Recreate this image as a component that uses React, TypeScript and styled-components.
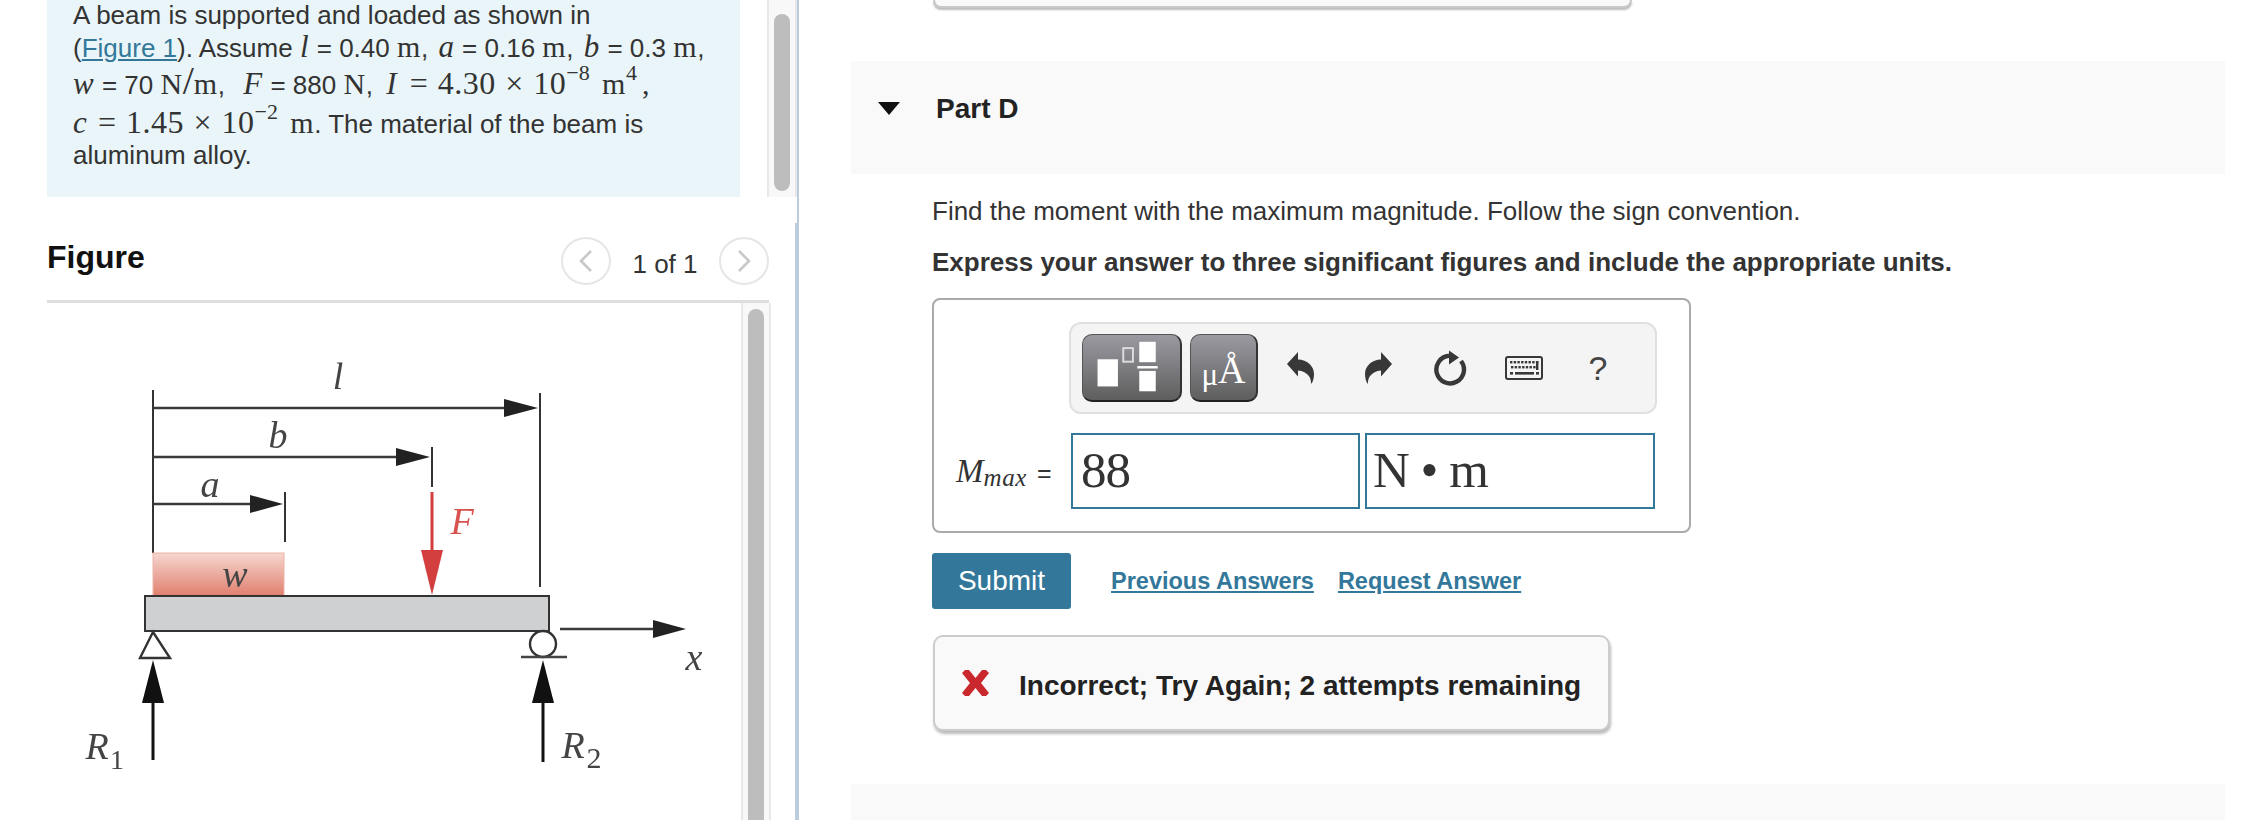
import React from "react";
import styled, { createGlobalStyle } from "styled-components";

const Global = createGlobalStyle`
  html, body { margin: 0; padding: 0; background: #fff; overflow: hidden; }
  body { font-family: "Liberation Sans", Arial, sans-serif; color: #333; }
`;
const Page = styled.div`
  display: flex; width: 2262px; height: 820px; overflow: hidden; background: #fff;
`;
const LeftPane = styled.section`
  position: relative; width: 799px; height: 820px; flex: none; box-sizing: border-box;
  border-right: 2px solid #bdcbde;
`;
const ResizeGrip = styled.div`
  position: absolute; left: 795px; top: 223px; width: 2px; bottom: 0; background: #bdcbde;
`;
const ProblemRow = styled.div`
  display: flex; height: 197px; padding-left: 47px;
`;
const InfoBox = styled.div`
  width: 694px; background: #e9f5f8; padding-left: 26px; box-sizing: border-box;
  font-size: 26px; color: #333;
`;
const Line = styled.div<{ $h: number }>`
  height: ${p => p.$h}px; line-height: ${p => p.$h}px; white-space: nowrap;
`;
const Unit = styled.span`
  font-family: "Liberation Serif", serif; font-size: 30px; letter-spacing: 0.6px;
`;
const Var = styled.span<{ $gap?: number }>`
  font-family: "Liberation Serif", serif; font-style: italic; font-size: 31px; letter-spacing: 1px;
  margin-left: ${p => p.$gap ?? 0}px;
`;
const Expr = styled.span<{ $gap: number }>`
  font-family: "Liberation Serif", serif; font-size: 32px; letter-spacing: 0.5px; word-spacing: 1px;
  margin-left: ${p => p.$gap}px;
`;
const Sup = styled.sup`
  font-family: "Liberation Serif", serif; font-size: 22px; line-height: 0; vertical-align: 14px;
  margin-right: 5px;
`;
const TallSlash = styled.span`
  font-family: "Liberation Serif", serif; font-size: 40px; line-height: 0; font-weight: 300;
`;
const FigLink = styled.a`
  color: #33789a; text-decoration: underline;
`;
const Track = styled.div<{ $mid: number }>`
  flex: none; width: 30px; box-sizing: border-box; background: #f8f8f8;
  border-left: 2px solid #e8e8e8; border-right: 2px solid #e8e8e8;
  margin-left: ${p => p.$mid}px; padding: 0 5px;
`;
const TrackUpper = styled(Track)`padding-top: 14px;`;
const TrackLower = styled(Track)`padding-top: 6px;`;
const Thumb = styled.div<{ $h: number }>`
  width: 16px; height: ${p => p.$h}px; background: #bdbdbd; border-radius: 8px;
`;
const FigureHead = styled.div`
  display: flex; align-items: flex-start; margin-left: 47px; width: 722px; height: 106px;
  padding-top: 40px; box-sizing: border-box; border-bottom: 3px solid #dedede;
`;
const FigureTitle = styled.h2`
  margin: 2px 0 0; font-size: 32px; line-height: 36px; font-weight: 700; color: #111; flex: 1;
`;
const Pager = styled.div`
  display: flex; align-items: center; height: 48px;
`;
const PageBtn = styled.button`
  width: 50px; height: 48px; border-radius: 50%; border: 2px solid #e6e6e6; background: #fff;
  display: flex; align-items: center; justify-content: center; padding: 0;
`;
const PageText = styled.span`
  font-size: 26px; color: #333; width: 108px; text-align: center; padding-top: 6px;
`;
const FigureBody = styled.div`
  display: flex; padding-left: 47px; height: 517px;
`;
const FigureSvg = styled.svg`
  width: 694px; height: 517px; flex: none; display: block; filter: blur(0.5px);
`;
const FigText = styled.text`
  font-family: "Liberation Serif", serif; font-style: italic; font-size: 38px; fill: #444; text-anchor: middle;
`;

const RightPane = styled.main`
  flex: 1; padding-left: 52px; min-width: 0;
`;
const PrevCard = styled.div`
  margin-left: 82px; width: 699px; height: 8px; box-sizing: border-box; background: #f9f9f9;
  border: 2px solid #c8c8c8; border-top: 0; border-radius: 0 0 8px 8px; box-shadow: 0 2px 2px #bbb;
`;
const PartBand = styled.div`
  margin-top: 53px; width: 1374px; height: 113px; background: #f9f9f9; box-sizing: border-box;
  display: flex; align-items: center; padding: 0 0 18px 27px;
`;
const Caret = styled.div`
  width: 0; height: 0; border-left: 11px solid transparent; border-right: 11px solid transparent;
  border-top: 13px solid #111; margin-top: -1px;
`;
const PartTitle = styled.h3`
  margin: 0 0 0 36px; font-size: 28px; font-weight: 700; color: #222;
`;
const Body = styled.div`
  padding-left: 81px;
`;
const Prompt = styled.p`
  margin: 22px 0 0; font-size: 26px; line-height: 30px; color: #333;
`;
const PromptBold = styled.p`
  margin: 21px 0 0; font-size: 26px; line-height: 30px; font-weight: 700; color: #333;
`;
const AnswerBox = styled.div`
  margin: 21px 0 0 0; width: 759px; height: 235px; box-sizing: border-box;
  border: 2px solid #aaa; border-radius: 8px; padding-top: 22px;
`;
const Toolbar = styled.div`
  margin-left: 135px; width: 588px; height: 92px; box-sizing: border-box; background: #f4f4f4;
  border: 2px solid #e0e0e0; border-radius: 12px; display: flex; align-items: center; padding-left: 11px;
`;
const ToolBtn = styled.button<{ $w: number }>`
  width: ${p => p.$w}px; height: 68px; flex: none; box-sizing: border-box; padding: 0; margin-right: 8px;
  border: 1px solid #555; border-bottom: 2px solid #222; border-right: 2px solid #333; border-radius: 10px;
  background: linear-gradient(#9b9aa2, #5e5e5e); color: #fff;
  display: flex; align-items: center; justify-content: center;
  font-family: "Liberation Serif", serif;
`;
const Mu = styled.span`font-size: 31px; padding-top: 14px;`;
const Ang = styled.span`font-size: 38px; padding-top: 4px;`;
const IconSlot = styled.div<{ $w: number; $first?: boolean }>`
  width: ${p => p.$w}px; flex: none; display: flex; justify-content: center; align-items: center;
  margin-left: ${p => (p.$first ? -8 : 0)}px; color: #333;
`;
const Question = styled.span`
  font-size: 34px; color: #444; font-family: "Liberation Sans", sans-serif;
`;
const InputRow = styled.div`
  display: flex; align-items: center; margin-top: 19px; padding-left: 22px;
`;
const EqLabel = styled.div`
  width: 115px; flex: none; font-size: 25px; white-space: nowrap; color: #333; word-spacing: 3px;
`;
const LabelM = styled.span`font-family: "Liberation Serif", serif; font-style: italic; font-size: 33px;`;
const LabelSub = styled.sub`font-family: "Liberation Serif", serif; font-style: italic; font-size: 25px; letter-spacing: 0.6px; line-height: 0; vertical-align: -4px;`;
const FieldBox = styled.div<{ $w: number; $pad: number }>`
  width: ${p => p.$w}px; height: 76px; box-sizing: border-box; border: 2px solid #31789a;
  font-family: "Liberation Serif", serif; font-size: 51px; line-height: 70px; color: #333;
  padding-left: ${p => p.$pad}px; white-space: nowrap; flex: none; margin-right: 5px; word-spacing: -2px;
`;
const Digits = styled.span`letter-spacing: -1px;`;
const ActionRow = styled.div`
  display: flex; align-items: center; margin-top: 20px;
`;
const SubmitBtn = styled.button`
  width: 139px; height: 56px; background: #33789a; color: #fff; border: 0; border-radius: 3px;
  font: 28px "Liberation Sans", sans-serif; padding: 0;
`;
const ActionLink = styled.a<{ $ml: number }>`
  margin-left: ${p => p.$ml}px; color: #33789a; font-size: 23.5px; font-weight: 700; text-decoration: underline;
`;
const Feedback = styled.div`
  margin: 26px 0 0 1px; width: 677px; height: 96px; box-sizing: border-box; background: #f9f9f9;
  border: 2px solid #ccc; border-radius: 10px; box-shadow: 1px 3px 3px #bbb;
  display: flex; align-items: center; padding-left: 27px; gap: 30px;
`;
const FeedbackText = styled.span`
  font-size: 28px; font-weight: 700; color: #222; white-space: nowrap; padding-top: 5px;
`;
const NextBand = styled.div`
  margin-top: 53px; width: 1374px; height: 60px; background: #f9f9f9;
`;

const Arrow = ({ x1, x2, y, hx, hw, c = "#222" }: { x1: number; x2: number; y: number; hx: number; hw: number; c?: string }) => (
  <>
    <line x1={x1} y1={y} x2={hx} y2={y} stroke="#3a3a3a" strokeWidth={2.4} />
    <polygon points={`${hx},${y - hw} ${x2},${y} ${hx},${y + hw}`} fill={c} />
  </>
);

const BeamFigure = () => (
  <FigureSvg viewBox="47 303 694 517">
    <defs>
      <linearGradient id="load" x1="0" y1="0" x2="0" y2="1">
        <stop offset="0" stopColor="#f6d6cf" />
        <stop offset="1" stopColor="#e07f6e" />
      </linearGradient>
    </defs>
    <line x1={153} y1={390} x2={153} y2={553} stroke="#333" strokeWidth={2} />
    <line x1={540} y1={393} x2={540} y2={587} stroke="#333" strokeWidth={2} />
    <line x1={432} y1={447} x2={432} y2={487} stroke="#333" strokeWidth={2} />
    <line x1={285} y1={492} x2={285} y2={542} stroke="#333" strokeWidth={2} />
    <Arrow x1={153} x2={538} y={408} hx={504} hw={9} />
    <Arrow x1={153} x2={430} y={457} hx={396} hw={9} />
    <Arrow x1={153} x2={283} y={504} hx={250} hw={9} />
    <FigText x={338} y={389}>l</FigText>
    <FigText x={278} y={448}>b</FigText>
    <FigText x={210} y={497}>a</FigText>
    <rect x={153} y={553} width={131} height={43} fill="url(#load)" stroke="#ecb3a8" strokeWidth={1} />
    <FigText x={235} y={587}>w</FigText>
    <line x1={432} y1={492} x2={432} y2={552} stroke="#d33f3f" strokeWidth={3} />
    <polygon points="421,550 443,550 432,595" fill="#d33f3f" />
    <FigText x={462} y={534} style={{ fill: "#d8524e" }}>F</FigText>
    <rect x={145} y={596} width={404} height={35} fill="#cfd0d2" stroke="#333" strokeWidth={2} />
    <Arrow x1={560} x2={686} y={629} hx={653} hw={9} />
    <FigText x={694} y={670}>x</FigText>
    <polygon points="153,632 140,658 170,658" fill="#fff" stroke="#333" strokeWidth={2.4} />
    <ellipse cx={543} cy={644} rx={13} ry={13} fill="#fff" stroke="#333" strokeWidth={2.4} />
    <line x1={521} y1={657} x2={567} y2={657} stroke="#444" strokeWidth={2.6} />
    <line x1={153} y1={700} x2={153} y2={760} stroke="#111" strokeWidth={3} />
    <polygon points="153,660 142,703 164,703" fill="#111" />
    <line x1={543} y1={700} x2={543} y2={762} stroke="#111" strokeWidth={3} />
    <polygon points="543,660 532,703 554,703" fill="#111" />
    <FigText x={97} y={759}>R</FigText>
    <FigText x={117} y={769} style={{ fontSize: 28, fontStyle: "normal" }}>1</FigText>
    <FigText x={573} y={758}>R</FigText>
    <FigText x={594} y={768} style={{ fontSize: 30, fontStyle: "normal" }}>2</FigText>
  </FigureSvg>
);

const UndoIcon = ({ flip }: { flip?: boolean }) => (
  <svg width="27" height="32" viewBox="0 0 27 32" style={flip ? { transform: "scaleX(-1)" } : undefined}>
    <path d="M0 12 L11 0 L11 7.5 C20 7.5 27 14 27 22 C27 26 26 30 24 32 C24.5 26 21 19.5 11 18.5 L11 24.5 Z" fill="#383838" />
  </svg>
);
const ResetIcon = () => (
  <svg width="34" height="36" viewBox="0 0 34 36">
    <path d="M28 11 A13.8 13.8 0 1 1 16 5.8" fill="none" stroke="#383838" strokeWidth="4.4" />
    <path d="M16 0.5 L26 7.5 L16 14.5 Z" fill="#383838" />
  </svg>
);
const KeyboardIcon = () => (
  <svg width="38" height="24" viewBox="0 0 38 24">
    <rect x="1" y="1" width="36" height="22" rx="2" fill="#f4f4f4" stroke="#383838" strokeWidth="2" />
    {[0, 1, 2, 3, 4, 5, 6, 7].map(i => <rect key={i} x={5 + i * 3.7} y="5" width="2.4" height="2.4" fill="#383838" />)}
    {[0, 1, 2, 3, 4, 5, 6].map(i => <rect key={i} x={6 + i * 3.7} y="10" width="2.4" height="2.4" fill="#383838" />)}
    <rect x="31" y="5" width="2.4" height="9" fill="#383838" />
    <rect x="5" y="16" width="3" height="2.6" fill="#383838" />
    <rect x="10" y="16" width="19" height="2.6" fill="#383838" />
    <rect x="31" y="16" width="3" height="2.6" fill="#383838" />
  </svg>
);
const TemplateIcon = () => (
  <svg width="100" height="68" viewBox="0 0 100 68">
    <rect x="15" y="25" width="21" height="28" fill="#fff" />
    <rect x="41.5" y="13.5" width="10" height="14" fill="none" stroke="#ddd" strokeWidth="2" />
    <rect x="58" y="7" width="17" height="21" fill="#fff" />
    <rect x="56" y="32" width="21" height="2.5" fill="#fff" />
    <rect x="58" y="37" width="17" height="21" fill="#fff" />
  </svg>
);
const CrossIcon = () => (
  <svg width="27" height="26" viewBox="0 0 27 26">
    <path d="M3 0 L7 0 L13.5 8 L20 0 L24 0 L27 3 L19 13 L27 23 L24 26 L20 26 L13.5 18 L7 26 L3 26 L0 23 L8 13 L0 3 Z" fill="#c9282d" strokeLinejoin="round" />
  </svg>
);
const Chevron = ({ right }: { right?: boolean }) => (
  <svg width="14" height="24" viewBox="0 0 14 24">
    <path d={right ? "M2 2 L12 12 L2 22" : "M12 2 L2 12 L12 22"} fill="none" stroke="#c8c8c8" strokeWidth="2.6" />
  </svg>
);

export default function App() {
  return (
    <Page>
      <Global />
      <LeftPane>
        <ProblemRow>
          <InfoBox>
            <Line $h={30}>A beam is supported and loaded as shown in</Line>
            <Line $h={34}>(<FigLink>Figure 1</FigLink>). Assume <Var>l</Var> = 0.40 <Unit>m</Unit>, <Var $gap={3}>a</Var> = 0.16 <Unit>m</Unit>, <Var $gap={3}>b</Var> = 0.3 <Unit>m</Unit>,</Line>
            <Line $h={39}><Var>w</Var> = 70 <Unit>N</Unit><TallSlash>/</TallSlash><Unit>m</Unit>, <Var $gap={11}>F</Var> = 880 <Unit>N</Unit>, <Var $gap={6}>I</Var> <Expr $gap={5}>= 4.30 × 10</Expr><Sup>−8</Sup> <Unit>m</Unit><Sup>4</Sup><Unit>,</Unit></Line>
            <Line $h={38}><Var>c</Var> <Expr $gap={3}>= 1.45 × 10</Expr><Sup>−2</Sup> <Unit>m</Unit>. The material of the beam is</Line>
            <Line $h={28}>aluminum alloy.</Line>
          </InfoBox>
          <TrackUpper $mid={27}><Thumb $h={177} /></TrackUpper>
        </ProblemRow>
        <FigureHead>
          <FigureTitle>Figure</FigureTitle>
          <Pager>
            <PageBtn aria-label="Previous"><Chevron /></PageBtn>
            <PageText>1 of 1</PageText>
            <PageBtn aria-label="Next"><Chevron right /></PageBtn>
          </Pager>
        </FigureHead>
        <FigureBody>
          <BeamFigure />
          <TrackLower $mid={0}><Thumb $h={600} /></TrackLower>
        </FigureBody>
        <ResizeGrip />
      </LeftPane>
      <RightPane>
        <PrevCard />
        <PartBand>
          <Caret />
          <PartTitle>Part D</PartTitle>
        </PartBand>
        <Body>
          <Prompt>Find the moment with the maximum magnitude. Follow the sign convention.</Prompt>
          <PromptBold>Express your answer to three significant figures and include the appropriate units.</PromptBold>
          <AnswerBox>
            <Toolbar>
              <ToolBtn $w={100} aria-label="Templates"><TemplateIcon /></ToolBtn>
              <ToolBtn $w={68} aria-label="Units"><Mu>μ</Mu><Ang>Å</Ang></ToolBtn>
              <IconSlot $first $w={84}><UndoIcon /></IconSlot>
              <IconSlot $w={72}><UndoIcon flip /></IconSlot>
              <IconSlot $w={72}><ResetIcon /></IconSlot>
              <IconSlot $w={76}><KeyboardIcon /></IconSlot>
              <IconSlot $w={72}><Question>?</Question></IconSlot>
            </Toolbar>
            <InputRow>
              <EqLabel><LabelM>M</LabelM><LabelSub>max</LabelSub> =</EqLabel>
              <FieldBox $w={289} $pad={8}><Digits>88</Digits></FieldBox>
              <FieldBox $w={290} $pad={6}>N • m</FieldBox>
            </InputRow>
          </AnswerBox>
          <ActionRow>
            <SubmitBtn>Submit</SubmitBtn>
            <ActionLink $ml={40}>Previous Answers</ActionLink>
            <ActionLink $ml={24}>Request Answer</ActionLink>
          </ActionRow>
          <Feedback>
            <CrossIcon />
            <FeedbackText>Incorrect; Try Again; 2 attempts remaining</FeedbackText>
          </Feedback>
        </Body>
        <NextBand />
      </RightPane>
    </Page>
  );
}
